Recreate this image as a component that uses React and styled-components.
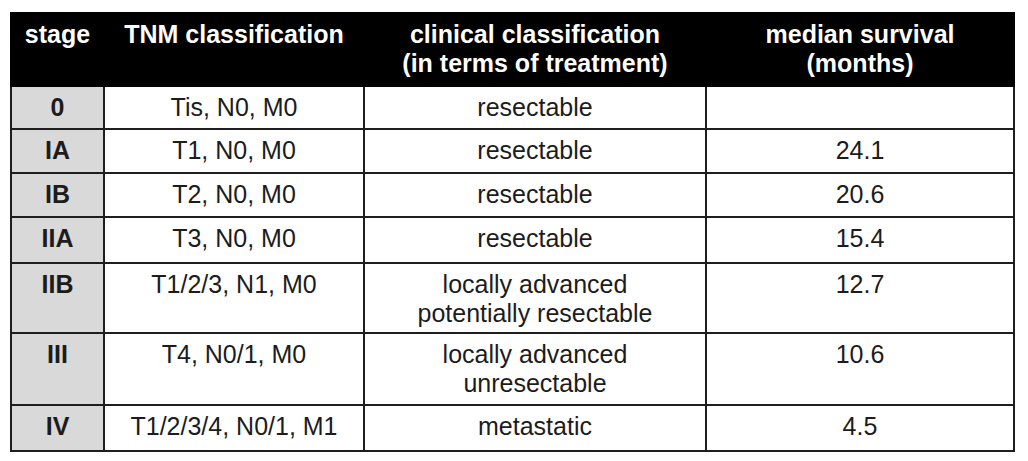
import React from 'react';
import styled, { createGlobalStyle } from 'styled-components';

const GlobalStyle = createGlobalStyle`
    html, body {
        margin: 0;
        padding: 0;
        background: #fff;
    }
    body {
        font-family: "Liberation Sans", Arial, sans-serif;
    }
`;

const Page = styled.div`
    padding: 12px 0 0 10px;
`;

const Table = styled.table`
    border-collapse: collapse;
    table-layout: fixed;
    width: 1005px;
    font-size: 25px;
    line-height: 29px;
    color: #1c1c1c;
    border: 2px solid #1e1e1e;
`;

const Col = styled.col`
    width: ${p => p.$w}px;
`;

const Row = styled.tr`
    height: ${p => p.$h}px;
`;

const HeadCell = styled.th`
    background: #000;
    color: #fff;
    font-weight: bold;
    text-align: center;
    vertical-align: top;
    padding: 6px 4px 0;
    border: 2px solid #000;
`;

const Cell = styled.td`
    text-align: center;
    vertical-align: top;
    padding: 6px 4px 0;
    border: 2px solid #1e1e1e;
    background: ${p => (p.$stage ? '#d9d9d9' : '#fff')};
    font-weight: ${p => (p.$stage ? 'bold' : 'normal')};
`;

const Line = styled.div``;

const columns = [93, 260, 342, 308];

const rows = [
    { stage: '0', tnm: 'Tis, N0, M0', clinical: ['resectable'], survival: '', h: 43 },
    { stage: 'IA', tnm: 'T1, N0, M0', clinical: ['resectable'], survival: '24.1', h: 44 },
    { stage: 'IB', tnm: 'T2, N0, M0', clinical: ['resectable'], survival: '20.6', h: 44 },
    { stage: 'IIA', tnm: 'T3, N0, M0', clinical: ['resectable'], survival: '15.4', h: 46 },
    { stage: 'IIB', tnm: 'T1/2/3, N1, M0', clinical: ['locally advanced', 'potentially resectable'], survival: '12.7', h: 70 },
    { stage: 'III', tnm: 'T4, N0/1, M0', clinical: ['locally advanced', 'unresectable'], survival: '10.6', h: 72 },
    { stage: 'IV', tnm: 'T1/2/3/4, N0/1, M1', clinical: ['metastatic'], survival: '4.5', h: 46 },
];

const App = () => {
    return (
        <Page>
            <GlobalStyle />
            <Table>
                <colgroup>
                    {columns.map((w, i) => <Col key={i} $w={w} />)}
                </colgroup>
                <thead>
                    <Row $h={73}>
                        <HeadCell>stage</HeadCell>
                        <HeadCell>TNM classification</HeadCell>
                        <HeadCell>
                            <Line>clinical classification</Line>
                            <Line>(in terms of treatment)</Line>
                        </HeadCell>
                        <HeadCell>
                            <Line>median survival</Line>
                            <Line>(months)</Line>
                        </HeadCell>
                    </Row>
                </thead>
                <tbody>
                    {rows.map(r => (
                        <Row key={r.stage} $h={r.h}>
                            <Cell $stage>{r.stage}</Cell>
                            <Cell>{r.tnm}</Cell>
                            <Cell>
                                {r.clinical.map(line => <Line key={line}>{line}</Line>)}
                            </Cell>
                            <Cell>{r.survival}</Cell>
                        </Row>
                    ))}
                </tbody>
            </Table>
        </Page>
    );
};

export default App;
